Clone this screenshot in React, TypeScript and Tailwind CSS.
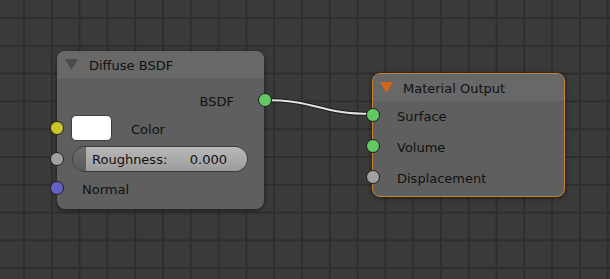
import React from "react";

type SocketProps = { color: string; side: "left" | "right" };

function Socket({ color, side }: SocketProps) {
  return (
    <span
      className={
        "absolute top-1/2 h-[14px] w-[14px] -translate-y-1/2 rounded-full border border-[#1e1e1e] " +
        (side === "left" ? "left-[-7.5px] " : "right-[-7.5px] ") +
        color
      }
    />
  );
}

function Triangle({ color }: { color: string }) {
  return (
    <svg width="13" height="11" viewBox="0 0 13 11" className="shrink-0">
      <path d="M0 0 H13 L6.5 11 Z" fill={color} />
    </svg>
  );
}

function DiffuseNode() {
  return (
    <div className="absolute left-[57px] top-[51px] flex h-[158px] w-[207px] flex-col rounded-[8px] bg-[#5f5f5f] shadow-[0_1px_5px_rgba(0,0,0,0.55)]">
      <div className="flex h-[27px] items-center gap-[11px] rounded-t-[8px] bg-[#686868] pl-[8px]">
        <Triangle color="#4a4a4a" />
        <span className="translate-y-[1px]">Diffuse BSDF</span>
      </div>
      <div className="flex flex-col pt-[10px] pb-[9px]">
        <div className="relative flex h-[24px] items-center justify-end pr-[30px]">
          <span className="translate-y-[2px]">BSDF</span>
          <Socket color="bg-[#63c763]" side="right" />
        </div>
        <div className="relative mt-[3px] flex h-[26px] items-center pl-[14px]">
          <Socket color="bg-[#c7c729]" side="left" />
          <span className="h-[26px] w-[41px] rounded-[5px] border border-[#3c3c3c] bg-white" />
          <span className="ml-[19px] translate-y-[2px]">Color</span>
        </div>
        <div className="relative mt-[5px] flex h-[26px] items-center pl-[15px]">
          <Socket color="bg-[#a1a1a1]" side="left" />
          <div className="flex h-[26px] w-[176px] overflow-hidden rounded-full border border-[#3a3a3a]">
            <span className="w-[13px] bg-[linear-gradient(#6e6e6e,#595959)]" />
            <div className="flex flex-1 items-center justify-between bg-[linear-gradient(#b8b8b8,#9c9c9c)] pl-[6px] pr-[20px] pt-[2px]">
              <span>Roughness:</span>
              <span>0.000</span>
            </div>
          </div>
        </div>
        <div className="relative mt-[4px] flex h-[24px] items-center pl-[25px]">
          <Socket color="bg-[#6363c7]" side="left" />
          <span className="translate-y-[2px]">Normal</span>
        </div>
      </div>
    </div>
  );
}

function OutputNode() {
  const rows: [string, string][] = [
    ["Surface", "bg-[#63c763]"],
    ["Volume", "bg-[#63c763]"],
    ["Displacement", "bg-[#a1a1a1]"],
  ];
  return (
    <div className="absolute left-[372px] top-[73px] flex h-[124px] w-[193px] flex-col rounded-[8px] border border-[#c9832f] bg-[#5f5f5f] shadow-[0_1px_5px_rgba(0,0,0,0.55)]">
      <div className="flex h-[27px] items-center gap-[10px] rounded-t-[7px] bg-[#686868] pl-[7px]">
        <Triangle color="#d2651c" />
        <span className="translate-y-[1px]">Material Output</span>
      </div>
      <div className="flex flex-col gap-[5px] pt-[1px]">
        {rows.map(([label, color]) => (
          <div key={label} className="relative flex h-[26px] items-center pl-[24px]">
            <Socket color={color} side="left" />
            <span className="translate-y-[2px]">{label}</span>
          </div>
        ))}
      </div>
    </div>
  );
}

export default function App() {
  return (
    <div className="relative h-[279px] w-[610px] overflow-hidden bg-[#3a3a3a] bg-[linear-gradient(to_right,#2e2e2e_2px,transparent_2px),linear-gradient(to_bottom,#2e2e2e_2px,transparent_2px)] bg-[size:27.8px_27.8px] bg-[position:23px_17px] font-['DejaVu_Sans',sans-serif] text-[13px] text-[#111]">
      <svg className="absolute left-0 top-0" width="610" height="279">
        <path d="M263 100 C318 100 318 114 372 114" fill="none" stroke="#1c1c1c" strokeWidth="4" />
        <path d="M263 100 C318 100 318 114 372 114" fill="none" stroke="#e2e2e2" strokeWidth="2" />
      </svg>
      <DiffuseNode />
      <OutputNode />
    </div>
  );
}
